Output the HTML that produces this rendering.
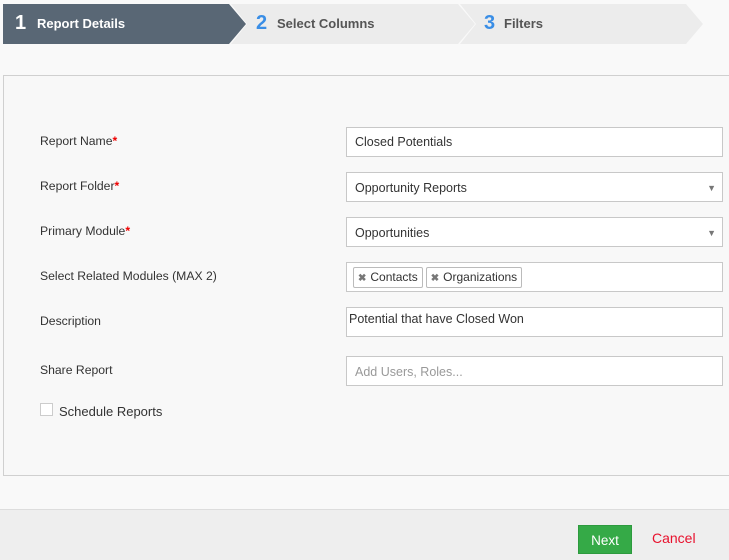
<!DOCTYPE html>
<html><head><style>
*{box-sizing:border-box}
body{margin:0;width:729px;height:560px;background:#f9f9f9;font-family:"Liberation Sans",sans-serif;position:relative;overflow:hidden;font-size:13px;color:#333}
.a{position:absolute}
.inp{position:absolute;left:346px;width:377px;height:30px;background:#fff;border:1px solid #c8c8c8;font-size:12.5px;padding:0 8px;line-height:28px;color:#333}
.lbl{position:absolute;left:40px;font-size:12.2px;color:#333}
.req{color:#e00;font-weight:bold}
.car{position:absolute;right:6px;top:0;font-size:9px;color:#777}
.tag{display:inline-block;border:1px solid #bbb;border-radius:2px;height:21px;line-height:19px;padding:0 4px;margin:4px 0 0 -2px;margin-right:5px;font-size:12px;background:#fff}
.tag b{color:#777;font-size:10px;margin-right:4px}
</style></head><body>
<svg class="a" style="left:0;top:0" width="729" height="48">
<polygon points="231,4 458,4 475,24 458,44 231,44 247,24" fill="#ececec"/>
<polygon points="460,4 686,4 703,24 686,44 460,44 476,24" fill="#ececec"/>
<polygon points="3,4 229,4 246,24 229,44 3,44" fill="#596775"/>
</svg>
<div class="a" style="left:15px;top:12px;color:#fff;font-size:20px;font-weight:bold">1</div>
<div class="a" style="left:37px;top:16px;color:#fff;font-size:13px;font-weight:bold">Report Details</div>
<div class="a" style="left:256px;top:12px;color:#3a8ee6;font-size:20px;font-weight:bold">2</div>
<div class="a" style="left:277px;top:16px;color:#555;font-size:13px;font-weight:bold">Select Columns</div>
<div class="a" style="left:484px;top:12px;color:#3a8ee6;font-size:20px;font-weight:bold">3</div>
<div class="a" style="left:504px;top:16px;color:#555;font-size:13px;font-weight:bold">Filters</div>
<div class="a" style="left:3px;top:75px;width:730px;height:401px;border:1px solid #d0d0d0;background:#f8f8f8"></div>
<div class="lbl" style="top:134px">Report Name<span class="req">*</span></div>
<div class="inp" style="top:127px">Closed Potentials</div>
<div class="lbl" style="top:179px">Report Folder<span class="req">*</span></div>
<div class="inp" style="top:172px;line-height:30px">Opportunity Reports<span class="car">▼</span></div>
<div class="lbl" style="top:224px">Primary Module<span class="req">*</span></div>
<div class="inp" style="top:217px;line-height:30px">Opportunities<span class="car">▼</span></div>
<div class="lbl" style="top:269px">Select Related Modules (MAX 2)</div>
<div class="inp" style="top:262px;line-height:normal;padding-left:8px"><span class="tag"><b>✖</b>Contacts</span><span class="tag"><b>✖</b>Organizations</span></div>
<div class="lbl" style="top:314px">Description</div>
<div class="inp" style="top:307px;padding:3px 2px;line-height:16px">Potential that have Closed Won</div>
<div class="lbl" style="top:363px">Share Report</div>
<div class="inp" style="top:356px;color:#999;line-height:30px">Add Users, Roles...</div>
<div class="a" style="left:40px;top:403px;width:13px;height:13px;border:1px solid #ccc;background:#fff"></div>
<div class="a" style="left:59px;top:404px;font-size:13px">Schedule Reports</div>
<div class="a" style="left:0;top:509px;width:729px;height:51px;background:#eee;border-top:1px solid #ddd"></div>
<div class="a" style="left:578px;top:525px;width:54px;height:29px;background:#35aa47;border:1px solid #2d9a3e;color:#fff;text-align:center;line-height:29px;font-size:13.5px">Next</div>
<div class="a" style="left:652px;top:530px;color:#e8112d;font-size:14px">Cancel</div>
</body></html>
